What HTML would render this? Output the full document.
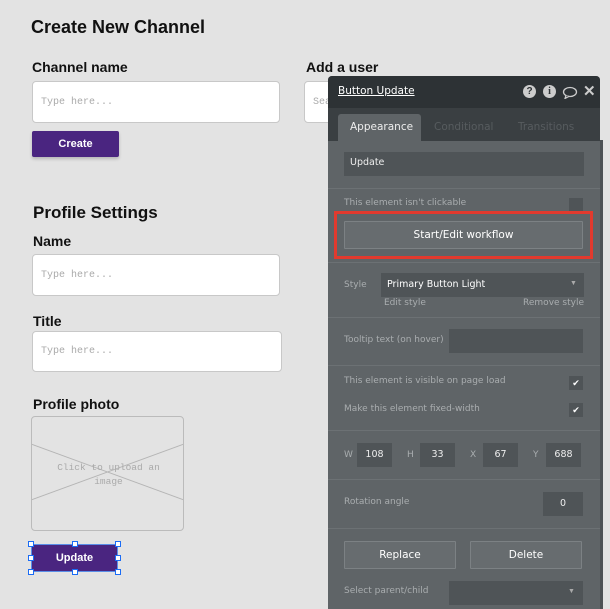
<!DOCTYPE html>
<html><head><style>
*{margin:0;padding:0;box-sizing:border-box}
body{width:610px;height:609px;background:#e3e3e3;position:relative;overflow:hidden;font-family:"Liberation Sans",sans-serif}
.a{position:absolute}
h1{position:absolute;font-size:18px;font-weight:bold;color:#111}
.lbl{position:absolute;font-size:14px;font-weight:bold;color:#111}
.inp{position:absolute;background:#fff;border:1px solid #c8c8c8;border-radius:4px;font-family:"Liberation Mono",monospace;font-size:10px;color:#aaa;padding-left:8px;display:flex;align-items:center}
.btn{position:absolute;background:#4a2580;color:#fff;font-size:11px;font-weight:bold;display:flex;align-items:center;justify-content:center;border-radius:2px}
.p{position:absolute;font-family:"DejaVu Sans",sans-serif;font-size:9px;color:#a9adaf}
.fld{position:absolute;background:#4f5457}
.pb{position:absolute;background:#676c6f;border:1px solid #7c8184;color:#fff;font-family:"DejaVu Sans",sans-serif;font-size:10.5px;display:flex;align-items:center;justify-content:center;border-radius:1px}
.sep{position:absolute;left:328px;width:272px;height:1px;background:#6c7174}
.chk{position:absolute;width:14px;height:14px;background:#4f5457;color:#fff;font-size:9px;line-height:14px;text-align:center}
.h{position:absolute;width:6px;height:6px;background:#fff;border:1px solid #1a6cf5}
.v{color:#eee;font-size:9.5px;font-family:'DejaVu Sans',sans-serif;text-align:center;line-height:24px}
</style></head><body>
<h1 style="left:31px;top:17px">Create New Channel</h1>
<div class="lbl" style="left:32px;top:59px">Channel name</div>
<div class="inp" style="left:32px;top:81px;width:248px;height:42px">Type here...</div>
<div class="btn" style="left:32px;top:131px;width:87px;height:26px;box-shadow:0 2px 3px rgba(0,0,0,.2)">Create</div>
<div class="lbl" style="left:306px;top:59px">Add a user</div>
<div class="inp" style="left:304px;top:81px;width:40px;height:42px">Sea</div>
<h1 style="left:33px;top:203px;font-size:17px">Profile Settings</h1>
<div class="lbl" style="left:33px;top:233px">Name</div>
<div class="inp" style="left:32px;top:254px;width:248px;height:42px">Type here...</div>
<div class="lbl" style="left:33px;top:313px">Title</div>
<div class="inp" style="left:32px;top:331px;width:250px;height:41px">Type here...</div>
<div class="lbl" style="left:33px;top:396px">Profile photo</div>
<div class="a" style="left:31px;top:416px;width:153px;height:115px;border:1px solid #bbb;border-radius:4px;overflow:hidden">
<svg width="153" height="115" style="position:absolute;left:-1px;top:-1px"><line x1="0" y1="28" x2="153" y2="84" stroke="#b5b5b5"/><line x1="0" y1="84" x2="153" y2="28" stroke="#b5b5b5"/></svg>
<div class="a" style="left:0;top:44px;width:153px;text-align:center;font-family:'Liberation Mono',monospace;font-size:9.5px;color:#aaa;line-height:14px">Click to upload an<br>image</div></div>
<div class="btn" style="left:31px;top:544px;width:87px;height:28px;border:1px solid #5a8ee8;border-radius:0">Update</div>
<div class="h" style="left:28px;top:541px"></div><div class="h" style="left:72px;top:541px"></div><div class="h" style="left:115px;top:541px"></div>
<div class="h" style="left:28px;top:555px"></div><div class="h" style="left:115px;top:555px"></div>
<div class="h" style="left:28px;top:569px"></div><div class="h" style="left:72px;top:569px"></div><div class="h" style="left:115px;top:569px"></div>

<div class="a" style="left:328px;top:76px;width:272px;height:533px;background:#5f6467;border-radius:4px 4px 0 0;overflow:hidden">
<div class="a" style="left:0;top:0;width:272px;height:32px;background:#2d3235"></div>
<div class="a" style="left:0;top:32px;width:272px;height:33px;background:#3a3f42"></div>
<div class="a" style="left:10px;top:38px;width:83px;height:27px;background:#5f6467;border-radius:3px 3px 0 0"></div>
</div>
<div class="a" style="left:600px;top:140px;width:3px;height:469px;background:#4d5255"></div>
<div class="a" style="left:338px;top:85px;color:#fff;font-family:'DejaVu Sans',sans-serif;font-size:10.5px;text-decoration:underline">Button Update</div>
<div class="a" style="left:523px;top:85px;width:13px;height:13px;border-radius:50%;background:#ccc;color:#2d3235;font-size:10px;font-weight:bold;text-align:center;line-height:13px">?</div>
<div class="a" style="left:543px;top:85px;width:13px;height:13px;border-radius:50%;background:#ccc;color:#2d3235;font-size:10px;font-weight:bold;text-align:center;line-height:13px;font-family:'Liberation Serif',serif">i</div>
<svg class="a" style="left:562px;top:86px" width="16" height="13"><ellipse cx="8" cy="6" rx="6.5" ry="4.5" fill="none" stroke="#ccc" stroke-width="1.3"/><path d="M4 9.5 L3 12.5 L7 10.3" fill="#2d3235" stroke="#ccc" stroke-width="1.2"/></svg>
<div class="a" style="left:583px;top:82px;color:#ccc;font-size:15px;font-weight:bold">✕</div>
<div class="a" style="left:350px;top:121px;color:#eee;font-family:'DejaVu Sans',sans-serif;font-size:10.5px">Appearance</div>
<div class="a" style="left:434px;top:121px;color:#575c5f;font-family:'DejaVu Sans',sans-serif;font-size:10.5px">Conditional</div>
<div class="a" style="left:518px;top:121px;color:#575c5f;font-family:'DejaVu Sans',sans-serif;font-size:10.5px">Transitions</div>
<div class="fld" style="left:344px;top:152px;width:240px;height:24px"></div>
<div class="a" style="left:350px;top:157px;color:#eee;font-family:'DejaVu Sans',sans-serif;font-size:9.5px">Update</div>
<div class="sep" style="top:188px"></div>
<div class="p" style="left:344px;top:198px">This element isn't clickable</div>
<div class="chk" style="left:569px;top:198px"></div>
<div class="a" style="left:334px;top:211px;width:259px;height:48px;border:3px solid #e23a2e"></div>
<div class="pb" style="left:344px;top:221px;width:239px;height:28px">Start/Edit workflow</div>
<div class="sep" style="top:262px"></div>
<div class="p" style="left:344px;top:280px">Style</div>
<div class="fld" style="left:381px;top:273px;width:203px;height:24px"></div>
<div class="a" style="left:387px;top:279px;color:#fff;font-family:'DejaVu Sans',sans-serif;font-size:9.5px">Primary Button Light</div>
<div class="a" style="left:570px;top:280px;color:#aaa;font-size:7px">▼</div>
<div class="p" style="left:384px;top:298px">Edit style</div>
<div class="p" style="right:26px;top:298px">Remove style</div>
<div class="sep" style="top:317px"></div>
<div class="p" style="left:344px;top:335px">Tooltip text (on hover)</div>
<div class="fld" style="left:449px;top:329px;width:134px;height:24px"></div>
<div class="sep" style="top:365px"></div>
<div class="p" style="left:344px;top:376px">This element is visible on page load</div>
<div class="chk" style="left:569px;top:376px">✔</div>
<div class="p" style="left:344px;top:404px">Make this element fixed-width</div>
<div class="chk" style="left:569px;top:403px">✔</div>
<div class="sep" style="top:430px"></div>
<div class="p" style="left:344px;top:450px">W</div><div class="fld v" style="left:357px;top:443px;width:35px;height:24px">108</div>
<div class="p" style="left:407px;top:450px">H</div><div class="fld v" style="left:420px;top:443px;width:35px;height:24px">33</div>
<div class="p" style="left:470px;top:450px">X</div><div class="fld v" style="left:483px;top:443px;width:35px;height:24px">67</div>
<div class="p" style="left:533px;top:450px">Y</div><div class="fld v" style="left:546px;top:443px;width:35px;height:24px">688</div>
<div class="sep" style="top:479px"></div>
<div class="p" style="left:344px;top:497px">Rotation angle</div>
<div class="fld v" style="left:543px;top:492px;width:40px;height:24px">0</div>
<div class="sep" style="top:528px"></div>
<div class="pb" style="left:344px;top:541px;width:112px;height:28px">Replace</div>
<div class="pb" style="left:470px;top:541px;width:112px;height:28px">Delete</div>
<div class="p" style="left:344px;top:586px">Select parent/child</div>
<div class="fld" style="left:449px;top:581px;width:134px;height:24px"></div>
<div class="a" style="left:568px;top:588px;color:#aaa;font-size:7px">▼</div>
</body></html>
